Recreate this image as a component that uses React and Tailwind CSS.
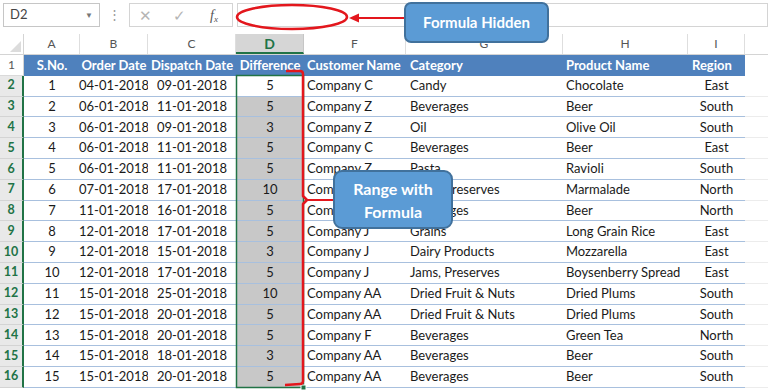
const cols = [
  { key: 'a', letter: 'A', w: 'w-[56px]', head: 'S.No.', align: 'justify-center', hAlign: 'justify-center' },
  { key: 'b', letter: 'B', w: 'w-[68px]', head: 'Order Date', align: 'justify-center', hAlign: 'justify-center' },
  { key: 'c', letter: 'C', w: 'w-[88px]', head: 'Dispatch Date', align: 'justify-center', hAlign: 'justify-center' },
  { key: 'd', letter: 'D', w: 'w-[68px]', head: 'Difference', align: 'justify-center', hAlign: 'justify-center' },
  { key: 'f', letter: 'F', w: 'w-[102px]', head: 'Customer Name', align: 'justify-start pl-[3px]', hAlign: 'justify-start pl-[3px]' },
  { key: 'g', letter: 'G', w: 'w-[157px]', head: 'Category', align: 'justify-start pl-[4px]', hAlign: 'justify-start pl-[4px]' },
  { key: 'h', letter: 'H', w: 'w-[125px]', head: 'Product Name', align: 'justify-start pl-[3px]', hAlign: 'justify-start pl-[3px]' },
  { key: 'i', letter: 'I', w: 'w-[57px]', head: 'Region', align: 'justify-center', hAlign: 'justify-start pl-[4px]' },
];

const rows = [
  ['1', '04-01-2018', '09-01-2018', '5', 'Company C', 'Candy', 'Chocolate', 'East'],
  ['2', '06-01-2018', '11-01-2018', '5', 'Company Z', 'Beverages', 'Beer', 'South'],
  ['3', '06-01-2018', '09-01-2018', '3', 'Company Z', 'Oil', 'Olive Oil', 'South'],
  ['4', '06-01-2018', '11-01-2018', '5', 'Company C', 'Beverages', 'Beer', 'East'],
  ['5', '06-01-2018', '11-01-2018', '5', 'Company Z', 'Pasta', 'Ravioli', 'South'],
  ['6', '07-01-2018', '17-01-2018', '10', 'Company D', 'Jams, Preserves', 'Marmalade', 'North'],
  ['7', '11-01-2018', '16-01-2018', '5', 'Company D', 'Beverages', 'Beer', 'North'],
  ['8', '12-01-2018', '17-01-2018', '5', 'Company J', 'Grains', 'Long Grain Rice', 'East'],
  ['9', '12-01-2018', '15-01-2018', '3', 'Company J', 'Dairy Products', 'Mozzarella', 'East'],
  ['10', '12-01-2018', '17-01-2018', '5', 'Company J', 'Jams, Preserves', 'Boysenberry Spread', 'East'],
  ['11', '15-01-2018', '25-01-2018', '10', 'Company AA', 'Dried Fruit & Nuts', 'Dried Plums', 'South'],
  ['12', '15-01-2018', '20-01-2018', '5', 'Company AA', 'Dried Fruit & Nuts', 'Dried Plums', 'South'],
  ['13', '15-01-2018', '20-01-2018', '5', 'Company F', 'Beverages', 'Green Tea', 'North'],
  ['14', '15-01-2018', '18-01-2018', '3', 'Company AA', 'Beverages', 'Beer', 'South'],
  ['15', '15-01-2018', '20-01-2018', '5', 'Company AA', 'Beverages', 'Beer', 'South'],
];

function FormulaBar() {
  return (
    <div className="h-[34px] flex items-start pt-[3px] pl-[3px] text-[13px] text-[#444]">
      <div className="w-[97px] h-[24px] border border-[#c6c6c6] bg-white flex items-center justify-between px-[6px]">
        <span>D2</span>
        <span className="text-[8px] text-[#777]">▼</span>
      </div>
      <div className="w-[29px] h-[24px] flex items-center justify-center text-[#999]">⋮</div>
      <div className="w-[104px] h-[24px] border border-[#d4d4d4] bg-white flex items-center">
        <span className="w-[30px] text-center text-[#b5b5b5] text-[15px]">✕</span>
        <span className="w-[38px] text-center text-[#b5b5b5] text-[15px]">✓</span>
        <span className="w-[32px] text-center text-[#555] italic font-['Liberation_Serif',serif] text-[14px]">
          f<sub className="text-[9px]">x</sub>
        </span>
      </div>
      <div className="flex-1 h-[24px] ml-[4px] border border-[#d4d4d4] bg-white" />
    </div>
  );
}

function ColumnHeaders() {
  return (
    <div className="h-[21px] flex border-b border-[#d4d4d4] text-[12px] text-[#555]">
      <div className="w-[24px] relative border-r border-[#d4d4d4]">
        <div className="absolute right-[2px] bottom-[2px] w-0 h-0 border-l-[11px] border-l-transparent border-b-[11px] border-b-[#dcdcdc]" />
      </div>
      {cols.map((c) =>
        c.key === 'd' ? (
          <div
            key={c.key}
            className={`${c.w} flex items-center justify-center bg-[#d6d6d6] border-b-2 border-[#217346] text-[#217346] font-bold text-[14px] border-r border-r-[#c6c6c6]`}
          >
            {c.letter}
          </div>
        ) : (
          <div key={c.key} className={`${c.w} flex items-center justify-center border-r border-[#dedede]`}>
            {c.letter}
          </div>
        )
      )}
      <div className="flex-1" />
    </div>
  );
}

function HeaderRow() {
  return (
    <div className="h-[20.8px] flex">
      <div className="w-[24px] flex items-center justify-center text-[12px] text-[#555] border-b border-[#dadada] border-r border-r-[#d4d4d4]">
        1
      </div>
      {cols.map((c) => (
        <div
          key={c.key}
          className={`${c.w} flex items-center ${c.hAlign} bg-[#4f81bd] text-white font-bold text-[13px] whitespace-nowrap`}
        >
          {c.head}
        </div>
      ))}
      <div className="flex-1" />
    </div>
  );
}

function DataRow({ n, cells }) {
  return (
    <div className="h-[20.8px] flex">
      <div className="w-[24px] flex items-center justify-center text-[12.5px] font-bold text-[#217346] bg-[#e9e9e9] border-b border-[#d4d4d4] border-r-2 border-r-[#217346]">
        {n}
      </div>
      {cols.map((c, i) => (
        <div
          key={c.key}
          className={`${c.w} flex items-center ${c.align} text-[13px] text-[#1a1a1a] whitespace-nowrap border-b border-[#a8c0de] ${
            c.key === 'd' ? (n === 2 ? 'bg-white' : 'bg-[#c8c8c8]') : 'bg-white'
          }`}
        >
          {cells[i]}
        </div>
      ))}
      <div className="flex-1 border-b border-[#ececec]" />
    </div>
  );
}

function Overlays() {
  return (
    <svg className="absolute inset-0 pointer-events-none" width="768" height="390" viewBox="0 0 768 390">
      {/* selection border around D2:D16 */}
      <rect x="236.5" y="75.5" width="67" height="312" fill="none" stroke="#217346" strokeWidth="1.5" />
      <rect x="301" y="385" width="5" height="5" fill="#217346" stroke="white" strokeWidth="1" />
      {/* ellipse on formula bar */}
      <ellipse cx="292" cy="17" rx="55" ry="12" fill="none" stroke="#e3171d" strokeWidth="2.5" />
      <line x1="356" y1="18" x2="405" y2="18" stroke="#e3171d" strokeWidth="2" />
      <path d="M349 18 L359 13.5 L359 22.5 Z" fill="#e3171d" />
      {/* bracket */}
      <path
        d="M286 71 L300 71 Q303 71 303 74 L303 196 L307 200 L303 204 L303 381 Q303 384 300 384 L285 385"
        fill="none"
        stroke="#e3171d"
        strokeWidth="2.5"
        strokeLinejoin="round"
      />
      <line x1="306" y1="200" x2="335" y2="200" stroke="#e3171d" strokeWidth="2" />
    </svg>
  );
}

export default function App() {
  return (
    <div className="relative w-[768px] h-[390px] overflow-hidden bg-white font-['Lato',sans-serif]">
      <FormulaBar />
      <ColumnHeaders />
      <HeaderRow />
      {rows.map((r, i) => (
        <DataRow key={i} n={i + 2} cells={r} />
      ))}
      <Overlays />
      <div className="absolute left-[404px] top-[2px] w-[145px] h-[41px] rounded-[7px] bg-[#5b9bd5] border-2 border-[#41719c] flex items-center justify-center text-white font-bold text-[15px]">
        Formula Hidden
      </div>
      <div className="absolute left-[333px] top-[170px] w-[120px] h-[59px] rounded-[9px] bg-[#5b9bd5] border-2 border-[#41719c] flex flex-col items-center justify-center text-white font-bold text-[16px] leading-[23px]">
        <span>Range with</span>
        <span>Formula</span>
      </div>
    </div>
  );
}
